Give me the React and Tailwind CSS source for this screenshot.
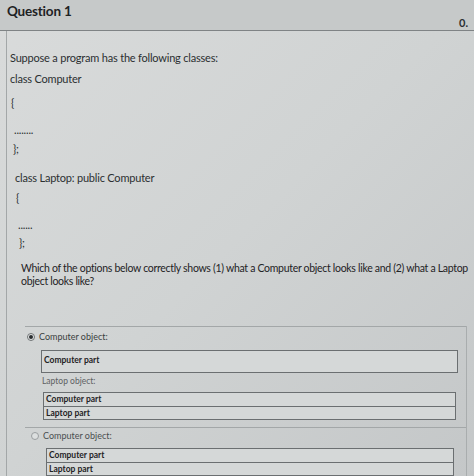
const Line = ({ className = '', children }) => (
  <p className={`text-[11px] leading-[16px] tracking-[-0.2px] text-[#2b2f31] ${className}`}>{children}</p>
);

const PartBox = ({ rows }) => (
  <div className="border border-[#6b6f71] bg-[#d5d8d8]">
    {rows.map((row, i) => (
      <div
        key={row}
        className={`px-[2px] text-[8.5px] font-bold text-[#1f2325] ${
          i > 0 ? 'border-t border-[#6b6f71]' : ''
        } ${rows.length === 1 ? 'h-[21px] leading-[19px]' : 'h-[13px] leading-[13px]'}`}
      >
        {row}
      </div>
    ))}
  </div>
);

const Radio = ({ checked }) => (
  <span
    className={`flex h-[8px] w-[8px] items-center justify-center rounded-full border ${
      checked ? 'border-[#6f7375] bg-[#e4e6e6]' : 'border-[#9a9ea0] bg-[#dcdfdf]'
    }`}
  >
    {checked && <span className="h-[4px] w-[4px] rounded-full bg-[#2a2e30]" />}
  </span>
);

export default function App() {
  return (
    <div className="h-[476px] w-[474px] overflow-hidden bg-gradient-to-br from-[#d9dbdb] via-[#d0d3d3] to-[#c4c7c8] font-['Lato','Liberation_Sans',sans-serif]">
      {/* Question header */}
      <div className="flex h-[31px] justify-between border-b border-[#7f8385] bg-[#c6c9c9] pl-[7px] pr-[6px]">
        <h2 className="pt-[3px] text-[13.5px] font-bold leading-[16px] tracking-[-0.2px] text-[#1e2224]">Question 1</h2>
        <span className="pt-[16px] text-[11px] font-bold leading-[14px] text-[#2b2f31]">0.</span>
      </div>

      {/* Question body */}
      <div className="ml-[6px] h-[445px] border-l border-[#a3a7a8] pl-[3px]">
        <Line className="pt-[19px]">Suppose a program has the following classes:</Line>
        <Line className="mt-[5px]">class Computer</Line>
        <Line className="mt-[8px] pl-[1px]">{'{'}</Line>
        <Line className="mt-[11px] pl-[4px] text-[8px]">........</Line>
        <Line className="mt-[3px] pl-[3px]">{'};'}</Line>
        <Line className="mt-[13px] pl-[5px]">class Laptop: public Computer</Line>
        <Line className="mt-[4px] pl-[6px]">{'{'}</Line>
        <Line className="mt-[11px] pl-[8px] text-[8px]">......</Line>
        <Line className="mt-[2px] pl-[9px]">{'};'}</Line>
        <p className="mt-[11px] w-[462px] pl-[11px] text-[10.5px] leading-[13px] tracking-[-0.3px] text-[#1f2325]">
          Which of the options below correctly shows (1) what a Computer object looks like and (2) what a Laptop
          object looks like?
        </p>

        {/* Answers */}
        <div className="ml-[15px] mr-[7px] mt-[38px] border-r border-[#a9adae]">
          <div className="border-t border-[#a3a7a8] pb-[7px] pl-[2px] pr-[8px]">
            <label className="mt-[3px] flex h-[14px] items-center gap-[4px] text-[9px] text-[#3a3e40]">
              <Radio checked />
              Computer object:
            </label>
            <div className="ml-[14px] mt-[6px]">
              <PartBox rows={['Computer part']} />
              <p className="mt-[2px] pl-[1px] text-[8.5px] leading-[12px] text-[#5d6163]">Laptop object:</p>
              <div className="mt-[5px] pl-[2px] pr-[2px]">
                <PartBox rows={['Computer part', 'Laptop part']} />
              </div>
            </div>
          </div>
          <div className="border-t border-[#a3a7a8] pl-[6px] pr-[12px]">
            <label className="mt-[1px] flex h-[14px] items-center gap-[4px] text-[9px] text-[#4a4e50]">
              <Radio />
              Computer object:
            </label>
            <div className="ml-[15px] mt-[5px]">
              <PartBox rows={['Computer part', 'Laptop part']} />
            </div>
          </div>
        </div>
      </div>
    </div>
  );
}
